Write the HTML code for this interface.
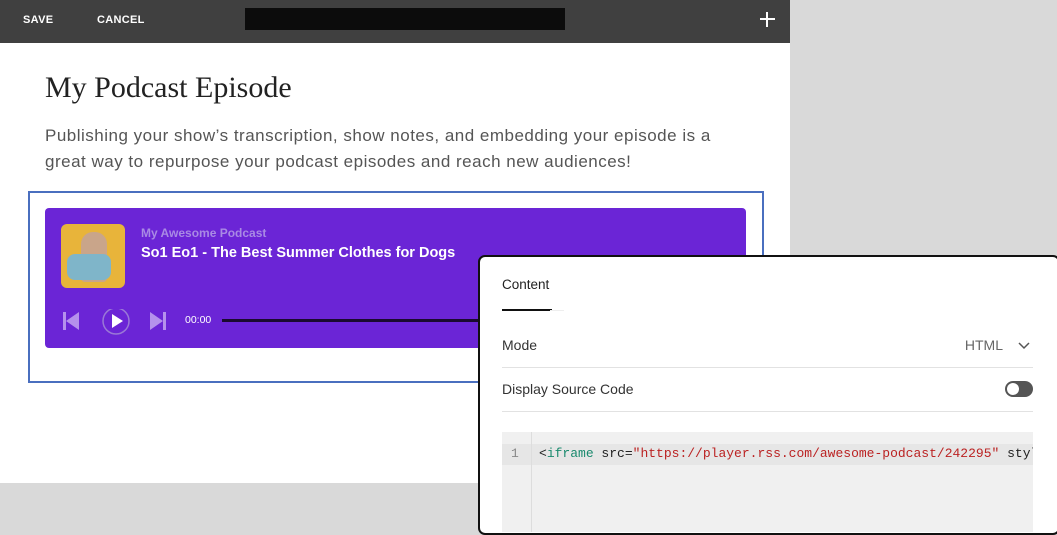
<!DOCTYPE html>
<html><head><meta charset="utf-8"><style>
*{margin:0;padding:0;box-sizing:border-box}
body{width:1057px;height:525px;background:#d9d9d9;position:relative;overflow:hidden;font-family:"Liberation Sans",sans-serif}
.page{position:absolute;left:0;top:0;width:790px;height:483px;background:#fff}
.bar{position:absolute;left:0;top:0;width:790px;height:43px;background:#404040}
.bar span{position:absolute;top:14px;color:#fff;font-size:11px;font-weight:bold;letter-spacing:.3px}
.blk{position:absolute;left:245px;top:8px;width:320px;height:22px;background:#0c0c0c}
.plus{position:absolute;left:760px;top:12px;width:15px;height:15px}
.plus:before{content:"";position:absolute;left:6px;top:0;width:2px;height:15px;background:#fff}
.plus:after{content:"";position:absolute;top:6px;left:0;height:2px;width:15px;background:#fff}
h1{position:absolute;left:45px;top:71px;font-family:"Liberation Serif",serif;font-weight:normal;font-size:30px;color:#222}
.p{position:absolute;left:45px;top:123px;width:680px;font-size:17px;letter-spacing:.5px;line-height:26px;color:#555}
.sel{position:absolute;left:28px;top:191px;width:736px;height:192px;border:2px solid #4a6fbf}
.player{position:absolute;left:45px;top:208px;width:701px;height:140px;background:#6b25d6;border-radius:4px}
.art{position:absolute;left:16px;top:16px;width:64px;height:64px;border-radius:6px;background:#e8b43a;overflow:hidden}
.dog{position:absolute;left:20px;top:8px;width:26px;height:50px;background:#c9a58a;border-radius:12px 12px 4px 4px}
.shirt{position:absolute;left:6px;top:30px;width:44px;height:26px;background:#7fb5c9;border-radius:8px}
.t1{position:absolute;left:96px;top:18px;color:#a98ae4;font-size:12px;font-weight:bold}
.t2{position:absolute;left:96px;top:37px;color:#fff;font-size:14.5px;font-weight:bold}
.time{position:absolute;left:140px;top:106px;color:#fff;font-size:10.5px}
.line{position:absolute;left:177px;top:111px;width:300px;height:3px;background:#1a0a30}
.panel{position:absolute;left:478px;top:255px;width:582px;height:280px;background:#fff;border:2px solid #111;border-radius:7px;overflow:hidden}
.tab{position:absolute;left:22px;top:20px;font-size:13.5px;color:#222}
.tabl{position:absolute;left:22px;top:52px;width:50px;height:2px;background:#111}
.tabl2{position:absolute;left:70px;top:53px;width:14px;height:1px;background:#eee}
.row{position:absolute;left:22px;width:531px;font-size:14px;color:#333}
.hr{position:absolute;left:22px;width:531px;height:1px;background:#e2e2e2}
.code{position:absolute;left:22px;top:175px;width:531px;height:100px;background:#f0f0f0;overflow:hidden}
.gut{position:absolute;left:29px;top:0;width:1px;height:100px;background:#ddd}
.hl{position:absolute;left:0;top:12px;width:531px;height:21px;background:#e6e6e6}
.cl{position:absolute;top:14px;font-family:"Liberation Mono",monospace;font-size:13px;white-space:nowrap;color:#222}
</style></head><body>
<div class="page">
<div class="bar"><span style="left:23px">SAVE</span><span style="left:97px">CANCEL</span><div class="blk"></div><div class="plus"></div></div>
<h1>My Podcast Episode</h1>
<div class="p">Publishing your show’s transcription, show notes, and embedding your episode is a great way to repurpose your podcast episodes and reach new audiences!</div>
<div class="sel"></div>
<div class="player">
<div class="art"><div class="dog"></div><div class="shirt"></div></div>
<div class="t1">My Awesome Podcast</div>
<div class="t2">So1 Eo1 - The Best Summer Clothes for Dogs</div>
<svg style="position:absolute;left:18px;top:101px" width="110" height="26">
<rect x="0" y="3" width="3" height="18" fill="#b591ec"/><path d="M3 12 L16 3 V21 Z" fill="#b591ec"/>
<circle cx="53" cy="12" r="13" fill="none" stroke="#9a78d6" stroke-width="1.5"/><path d="M49 5 L60 12 L49 19Z" fill="#fff"/>
<path d="M87 3 L100 12 L87 21Z" fill="#b591ec"/><rect x="100" y="3" width="3" height="18" fill="#b591ec"/>
</svg>
<div class="time">00:00</div><div class="line"></div>
</div>
</div>
<div class="panel">
<div class="tab">Content</div><div class="tabl"></div><div class="tabl2"></div>
<div class="row" style="top:80px">Mode<span style="position:absolute;right:30px;color:#666">HTML</span>
<svg style="position:absolute;right:3px;top:5px" width="12" height="8"><path d="M1 1 L6 6 L11 1" fill="none" stroke="#555" stroke-width="1.5"/></svg></div>
<div class="hr" style="top:110px"></div>
<div class="row" style="top:124px">Display Source Code
<div style="position:absolute;right:0;top:0;width:28px;height:16px;border-radius:8px;background:#555"><div style="position:absolute;left:2px;top:2px;width:12px;height:12px;border-radius:6px;background:#fff"></div></div></div>
<div class="hr" style="top:154px"></div>
<div class="code"><div class="hl"></div><div class="gut"></div>
<div class="cl" style="left:9px;color:#888">1</div>
<div class="cl" style="left:37px">&lt;<span style="color:#1a8a6e">iframe</span> src=<span style="color:#b22">"https://player.rss.com/awesome-podcast/242295"</span> style</div>
</div>
</div>
</body></html>
